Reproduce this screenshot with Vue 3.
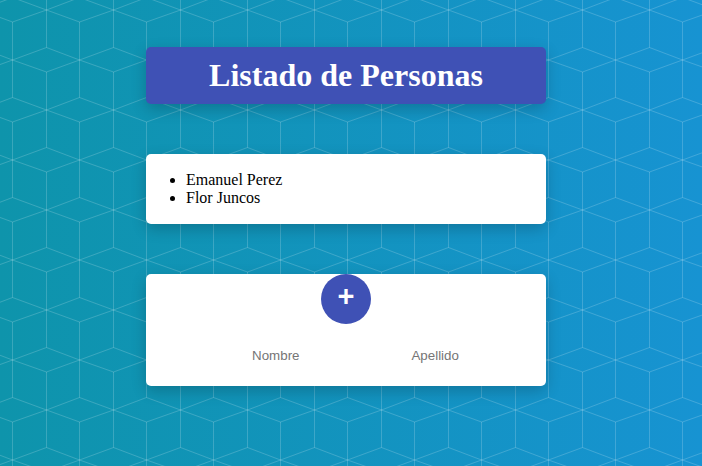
<script setup>
const personas = ['Emanuel Perez', 'Flor Juncos']
</script>

<template>
  <main class="page">
    <header class="card title-card">
      <h1>Listado de Personas</h1>
    </header>
    <section class="card list-card">
      <ul>
        <li v-for="p in personas" :key="p">{{ p }}</li>
      </ul>
    </section>
    <section class="card form-card">
      <button class="fab" type="button">+</button>
      <div class="fields">
        <span class="field">Nombre</span>
        <span class="field">Apellido</span>
      </div>
    </section>
  </main>
</template>

<style>
html, body { margin: 0; padding: 0; }
</style>

<style scoped>
.page {
  box-sizing: border-box;
  height: 466px;
  overflow: hidden;
  padding: 47px 10px 0 0;
  display: flex;
  flex-direction: column;
  align-items: center;
  gap: 50px;
  font-family: "Liberation Serif", serif;
  background-color: #1293bb;
  background-image:
    url("data:image/svg+xml,%3Csvg xmlns='http://www.w3.org/2000/svg' width='67' height='100'%3E%3Cpath d='M46.5 -28V10M46.5 10V47.5M46.5 72V110M12.5 22V60M12.5 60V97.5M12.5 -2.5L46.5 10L12.5 22M12.5 97.5L46.5 110M12.5 60L46.5 47.5M12.5 60L46.5 72M79.5 -2.5L46.5 10L79.5 22M79.5 97.5L46.5 110M79.5 60L46.5 47.5M79.5 60L46.5 72M12.5 -2.5L-20.5 10L12.5 22M12.5 97.5L-20.5 110M12.5 60L-20.5 47.5M12.5 60L-20.5 72' fill='none' stroke='%23fff' stroke-opacity='.18'/%3E%3C/svg%3E"),
    linear-gradient(to right, #0e94ab, #1793d2);
}
.card {
  width: 400px;
  flex: none;
  border-radius: 5px;
  background: #fff;
  box-shadow: 0 5px 15px rgba(0, 0, 0, .2);
}
.title-card {
  background: #3f51b5;
  color: #fff;
  text-align: center;
  padding: 10px 0;
}
h1 {
  margin: 0;
  font-size: 32px;
  line-height: 37px;
  font-weight: 700;
}
.list-card {
  padding: 17px 0;
  font-size: 16px;
  line-height: 18px;
  color: #000;
}
ul {
  margin: 0;
  padding: 0 0 0 40px;
}
.form-card {
  height: 112px;
  display: flex;
  flex-direction: column;
  align-items: center;
}
.fab {
  width: 50px;
  height: 50px;
  flex: none;
  padding: 0 0 7px;
  border: 0;
  border-radius: 50%;
  background: #3f51b5;
  color: #fff;
  font: 700 29px/32px "Liberation Sans", sans-serif;
}
.fields {
  margin-top: 24px;
  padding-left: 19px;
  display: flex;
  justify-content: center;
  gap: 112px;
}
.field {
  font: 13.33px/15px "Liberation Sans", sans-serif;
  color: #757575;
}
</style>
